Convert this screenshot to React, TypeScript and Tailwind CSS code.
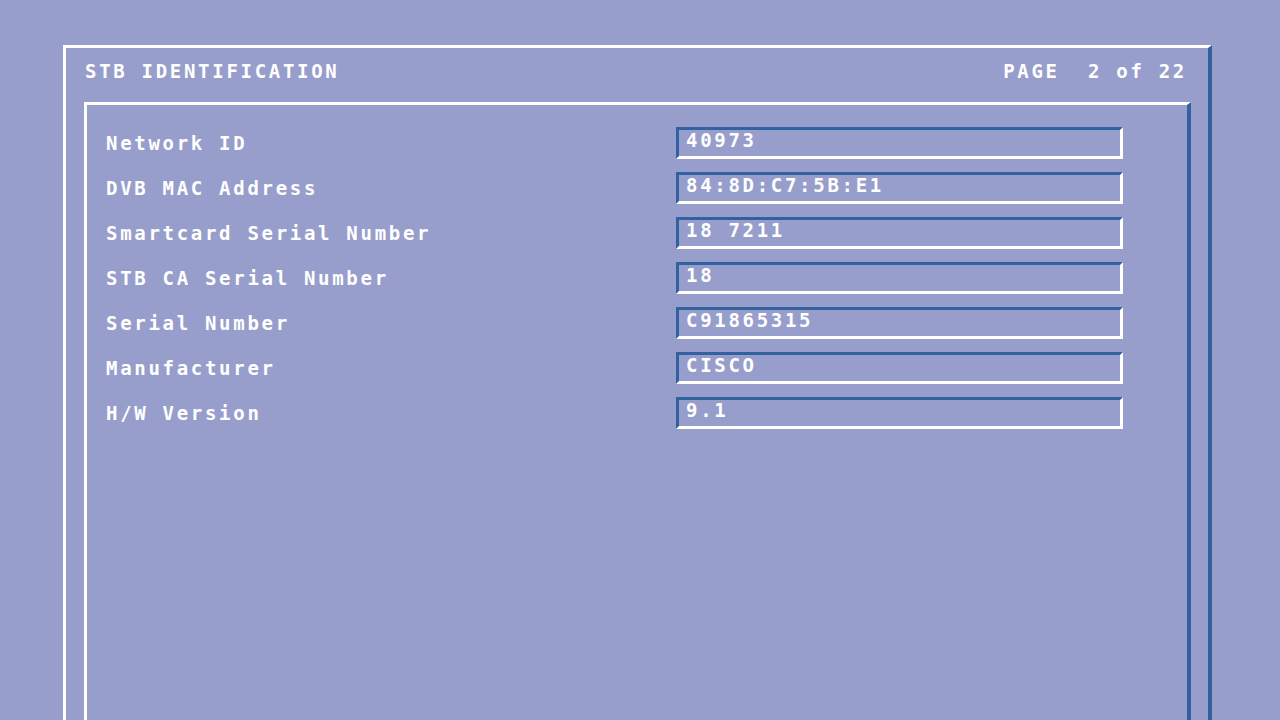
const fields = [
  { label: 'Network ID', value: '40973' },
  { label: 'DVB MAC Address', value: '84:8D:C7:5B:E1' },
  { label: 'Smartcard Serial Number', value: '18 7211' },
  { label: 'STB CA Serial Number', value: '18' },
  { label: 'Serial Number', value: 'C91865315' },
  { label: 'Manufacturer', value: 'CISCO' },
  { label: 'H/W Version', value: '9.1' },
];

const mono = "font-['DejaVu_Sans_Mono',monospace] font-bold text-[19px] tracking-[2.7px] text-white";

export default function App() {
  return (
    <div className="w-full h-[720px] overflow-hidden bg-[#979ecc] pt-[45px] pl-[63px]">
      {/* Outer frame */}
      <div className="w-[1149px] h-[700px] flex flex-col border-t-[3px] border-l-[3px] border-white border-r-[4px] border-r-[#31619f]">
        {/* Header */}
        <div className={`h-[54px] shrink-0 flex items-center justify-between pl-[19px] pr-[21px] pb-[7px] ${mono}`}>
          <span>STB IDENTIFICATION</span>
          <span className="whitespace-pre">PAGE  2 of 22</span>
        </div>

        {/* Inner frame */}
        <div className="flex-1 ml-[18px] mr-[17px] border-t-[3px] border-l-[3px] border-white border-r-[4px] border-r-[#31619f] pt-[22px] pl-[19px]">
          <div className="flex flex-col gap-[13px]">
            {fields.map((f) => (
              <div key={f.label} className="flex items-center">
                <div className={`w-[570px] shrink-0 ${mono}`}>{f.label}</div>
                <div className="w-[447px] h-[32px] border-t-[3px] border-l-[3px] border-[#31619f] border-b-[3px] border-r-[3px] border-b-white border-r-white pl-[7px] pt-[1px]">
                  <div className={`leading-[18px] ${mono}`}>{f.value}</div>
                </div>
              </div>
            ))}
          </div>
        </div>
      </div>
    </div>
  );
}
